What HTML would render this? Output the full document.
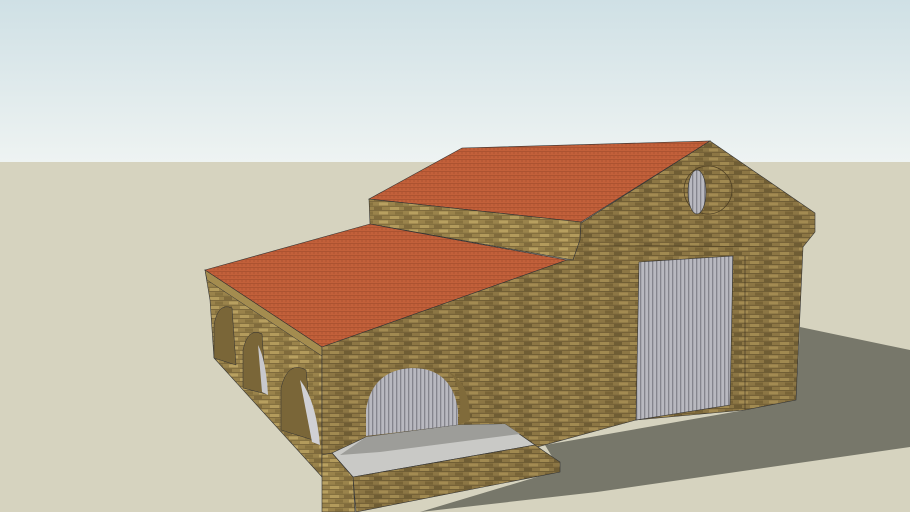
<!DOCTYPE html>
<html><head><meta charset="utf-8"><style>html,body{margin:0;padding:0;overflow:hidden;background:#d6d3bf}svg{display:block}</style></head><body>
<svg width="910" height="512" viewBox="0 0 910 512" xmlns="http://www.w3.org/2000/svg">
<defs>
<linearGradient id="sky" x1="0" y1="0" x2="0" y2="1"><stop offset="0" stop-color="#cfe0e5"/><stop offset="1" stop-color="#eef3f2"/></linearGradient>
<pattern id="brick" width="30" height="9" patternUnits="userSpaceOnUse"><rect width="30" height="9" fill="#8c7644"/><rect x="0" y="0" width="9" height="3" fill="#a18a51"/><rect x="14" y="0" width="8" height="3" fill="#6f5d34"/><rect x="5" y="4.5" width="8" height="3" fill="#786437"/><rect x="19" y="4.5" width="9" height="3" fill="#a38b52"/><path d="M0 3.7H30M0 8.2H30" stroke="#5f4f2c" stroke-width="0.7"/></pattern>
<pattern id="brickL" width="30" height="9" patternUnits="userSpaceOnUse"><rect width="30" height="9" fill="#9a834b"/><rect x="0" y="0" width="9" height="3" fill="#b39b5c"/><rect x="14" y="0" width="8" height="3" fill="#806b3c"/><rect x="5" y="4.5" width="8" height="3" fill="#87723f"/><rect x="19" y="4.5" width="9" height="3" fill="#b8a060"/><path d="M0 3.7H30M0 8.2H30" stroke="#6e5c33" stroke-width="0.7"/></pattern>
<pattern id="roof" width="4" height="4" patternUnits="userSpaceOnUse"><rect width="4" height="4" fill="#c2603a"/><path d="M0 3.5H4M2 0V2" stroke="#a54e2d" stroke-width="0.7"/></pattern>
<pattern id="corr" width="4" height="4" patternUnits="userSpaceOnUse"><rect width="4" height="4" fill="#b9b9c0"/><rect width="1.3" height="4" fill="#85858d"/></pattern>
</defs>
<rect width="910" height="162" fill="url(#sky)"/>
<rect y="162" width="910" height="350" fill="#d6d3bf"/>
<polygon points="800,327 910,350 910,447 597,492 420,512 560,470 545,445 745,410 796,400" fill="#77776a"/>
<polygon points="369,199 462,148 710,141 581,222" fill="url(#roof)" stroke="#333" stroke-width="0.6"/>
<polygon points="369,199 581,222 580,240 573,260 370,224" fill="url(#brickL)" stroke="#333" stroke-width="0.6"/>
<polygon points="205,270 322,347 322,477 214,358 210,300" fill="url(#brickL)" stroke="#333" stroke-width="0.6"/>
<polygon points="205,270 322,347 322,356 207,280" fill="#a48c4f" stroke="#333" stroke-width="0.5"/>
<path d="M214,358 L214,325 Q218,302 232,308 L236,365 Z" fill="#7a6638" stroke="#333" stroke-width="0.5"/>
<path d="M243,388 L243,350 Q248,327 262,334 L266,394 Z" fill="#7a6638" stroke="#333" stroke-width="0.5"/>
<path d="M258,345 Q266,360 268,395 L262,392 Z" fill="#c8c8cc"/>
<path d="M281,430 L281,388 Q288,360 306,370 L313,440 Z" fill="#7a6638" stroke="#333" stroke-width="0.5"/>
<path d="M300,380 Q316,400 320,445 L312,442 Z" fill="#d0d0d4"/>
<polygon points="205,270 370,224 567,260 322,347" fill="url(#roof)" stroke="#333" stroke-width="0.6"/>
<polygon points="322,347 567,260 573,260 580,240 581,223 710,141 815,213 815,232 803,247 796,400 745,410 636,420 537,447 510,432 322,477" fill="url(#brick)" stroke="#333" stroke-width="0.6"/>
<path d="M581,245 L803,247" stroke="#5a4a2a" stroke-width="0.6" fill="none"/>
<path d="M745,256 L745,410" stroke="#3a3020" stroke-width="0.6"/>
<circle cx="708" cy="190" r="24" fill="none" stroke="#4a3c22" stroke-width="0.7"/>
<ellipse cx="697" cy="192" rx="9" ry="22" fill="url(#corr)" stroke="#333" stroke-width="0.6"/>
<polygon points="639,262 733,256 730,405 636,420" fill="url(#corr)" stroke="#333" stroke-width="0.6"/>
<path d="M366,436 L366,410 Q372,370 412,368 Q452,368 458,410 L458,425 Z" fill="url(#corr)"/>
<path d="M458,425 Q466,382 445,370 Q470,380 470,420 Z" fill="#806b3b"/>
<polygon points="332,453 366,437 458,425 505,424 535,445 353,477" fill="#c9c9c6" stroke="#333" stroke-width="0.6"/>
<polygon points="366,437 458,425 505,424 520,434 380,452 340,455" fill="#9d9d99"/>
<polygon points="322,455 332,453 353,477 355,512 322,512" fill="url(#brickL)" stroke="#333" stroke-width="0.6"/>
<polygon points="353,477 535,445 545,452 560,462 560,472 356,512" fill="url(#brick)" stroke="#333" stroke-width="0.6"/>
</svg>
</body></html>
